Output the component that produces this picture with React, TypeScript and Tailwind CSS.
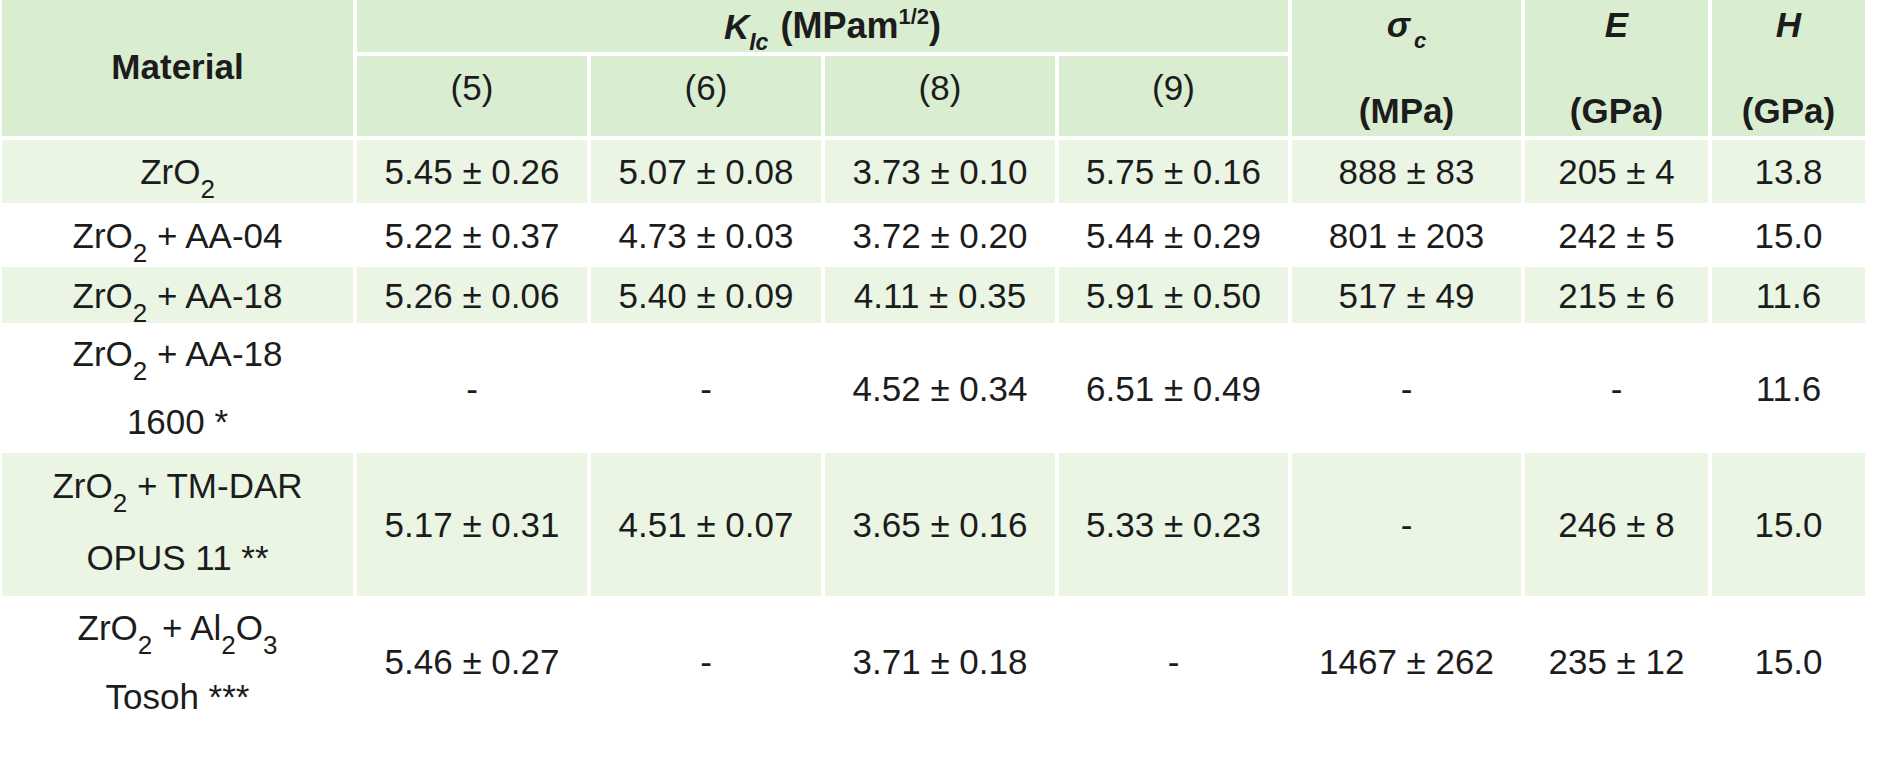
import React from "react";

const S = ({ children }: { children: React.ReactNode }) => (
  <sub className="text-[26px] bottom-[-14px]">{children}</sub>
);

const Zr = () => (
  <>
    ZrO<S>2</S>
  </>
);

type Row = {
  mat: React.ReactNode[];
  lead: string;
  vals: string[];
  green: boolean;
};

const rows: Row[] = [
  { mat: [<Zr key="a" />], lead: "leading-none", vals: ["5.45 ± 0.26", "5.07 ± 0.08", "3.73 ± 0.10", "5.75 ± 0.16", "888 ± 83", "205 ± 4", "13.8"], green: true },
  { mat: [<><Zr /> + AA-04</>], lead: "leading-none", vals: ["5.22 ± 0.37", "4.73 ± 0.03", "3.72 ± 0.20", "5.44 ± 0.29", "801 ± 203", "242 ± 5", "15.0"], green: false },
  { mat: [<><Zr /> + AA-18</>], lead: "leading-none", vals: ["5.26 ± 0.06", "5.40 ± 0.09", "4.11 ± 0.35", "5.91 ± 0.50", "517 ± 49", "215 ± 6", "11.6"], green: true },
  { mat: [<><Zr /> + AA-18</>, <>1600 *</>], lead: "leading-[68px]", vals: ["-", "-", "4.52 ± 0.34", "6.51 ± 0.49", "-", "-", "11.6"], green: false },
  { mat: [<><Zr /> + TM-DAR</>, <>OPUS 11 **</>], lead: "leading-[72px] pb-[6px]", vals: ["5.17 ± 0.31", "4.51 ± 0.07", "3.65 ± 0.16", "5.33 ± 0.23", "-", "246 ± 8", "15.0"], green: true },
  {
    mat: [
      <>
        <Zr /> + Al<S>2</S>O<S>3</S>
      </>,
      <>Tosoh ***</>,
    ],
    lead: "leading-[69px]",
    vals: ["5.46 ± 0.27", "-", "3.71 ± 0.18", "-", "1467 ± 262", "235 ± 12", "15.0"],
    green: false,
  },
];

const head = "bg-[#d9edd1] flex items-center justify-center text-center";

export default function App() {
  return (
    <div className="w-[1890px] h-[769px] bg-white overflow-hidden text-[#1c1c1c] text-[35px] font-['Liberation_Sans',Arial,sans-serif]">
      <div className="grid grid-cols-[351px_230px_230px_230px_229px_229px_183px_153px] grid-rows-[52px_80px_63px_56px_56px_122px_143px_123px] gap-[4px] pl-[2px]">
        <div className={`${head} row-span-2 font-bold leading-none pb-[4px]`}>Material</div>
        <div className={`${head} col-span-4 font-bold leading-none pl-[20px]`}>
          <span className="italic">
            K<sub className="text-[23px] bottom-[-11px]">Ic</sub>
          </span>
          <span className="ml-[12px] text-[36px]">
            (MPam<sup className="text-[22px] top-[-14px]">1/2</sup>)
          </span>
        </div>
        <div className={`${head} row-span-2 flex-col font-bold leading-[86px]`}>
          <div className="italic">
            σ<sub className="text-[22px] bottom-[-11px] ml-[4px]">c</sub>
          </div>
          <div>(MPa)</div>
        </div>
        <div className={`${head} row-span-2 flex-col font-bold leading-[86px]`}>
          <div className="italic">E</div>
          <div>(GPa)</div>
        </div>
        <div className={`${head} row-span-2 flex-col font-bold leading-[86px]`}>
          <div className="italic">H</div>
          <div>(GPa)</div>
        </div>
        {["(5)", "(6)", "(8)", "(9)"].map((t) => (
          <div key={t} className={`${head} leading-none pb-[18px]`}>
            {t}
          </div>
        ))}
        {rows.map((r, i) => (
          <React.Fragment key={i}>
            <div className={`${r.green ? "bg-[#eaf5e4]" : "bg-white"} flex flex-col items-center justify-center text-center ${r.lead}`}>
              {r.mat.map((m, j) => (
                <div key={j} className="whitespace-nowrap">
                  {m}
                </div>
              ))}
            </div>
            {r.vals.map((v, j) => (
              <div key={j} className={`${r.green ? "bg-[#eaf5e4]" : "bg-white"} flex items-center justify-center text-center leading-none whitespace-nowrap`}>
                {v}
              </div>
            ))}
          </React.Fragment>
        ))}
      </div>
    </div>
  );
}
